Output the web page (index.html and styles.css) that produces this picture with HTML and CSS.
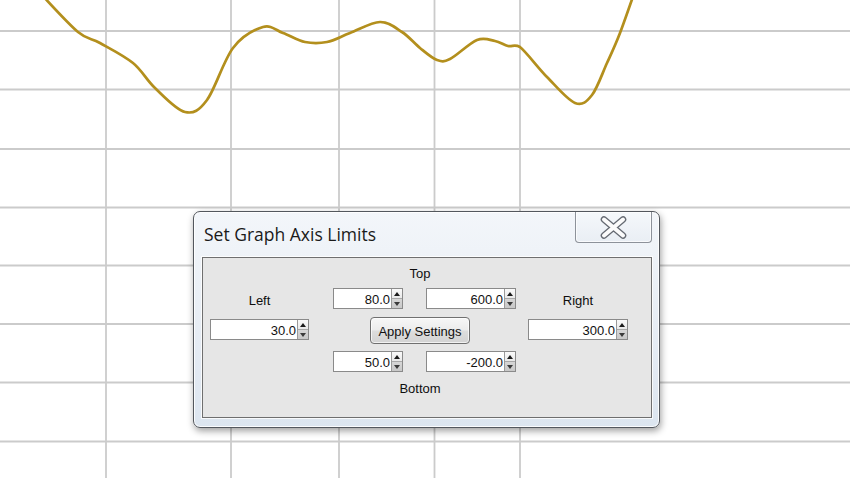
FILE: index.html
```html
<!DOCTYPE html>
<html lang="en">
<head>
<meta charset="utf-8">
<title>Set Graph Axis Limits</title>
<link rel="stylesheet" href="styles.css">
</head>
<body>
<div class="stage">
  <svg class="plot" width="850" height="478" viewBox="0 0 850 478" xmlns="http://www.w3.org/2000/svg">
    <g class="grid">
      <line x1="0" y1="31" x2="850" y2="31"/>
      <line x1="0" y1="89.5" x2="850" y2="89.5"/>
      <line x1="0" y1="149" x2="850" y2="149"/>
      <line x1="0" y1="207.5" x2="850" y2="207.5"/>
      <line x1="0" y1="265.5" x2="850" y2="265.5"/>
      <line x1="0" y1="324" x2="850" y2="324"/>
      <line x1="0" y1="382.5" x2="850" y2="382.5"/>
      <line x1="0" y1="441.5" x2="850" y2="441.5"/>
      <line x1="106" y1="0" x2="106" y2="478"/>
      <line x1="231" y1="0" x2="231" y2="478"/>
      <line x1="339" y1="0" x2="339" y2="478"/>
      <line x1="434.5" y1="0" x2="434.5" y2="478"/>
      <line x1="520" y1="0" x2="520" y2="478"/>
    </g>
    <path class="curve" d="M40,-7 C46.3,-0.5 68,23.7 78,32 C88,40.3 90.8,37.8 100,43 C109.2,48.2 123.8,55.5 133,63 C142.2,70.5 146.3,79.8 155,88 C163.7,96.2 176.3,110 185,112 C193.7,114 199,110.7 207,100 C215,89.3 223.7,60.2 233,48 C242.3,35.8 254.7,29.5 263,27 C271.3,24.5 276,30.5 283,33 C290,35.5 297.7,40.5 305,42 C312.3,43.5 319.5,43.5 327,42 C334.5,40.5 341.2,36.3 350,33 C358.8,29.7 371.3,22.2 380,22 C388.7,21.8 395.3,27.7 402,32 C408.7,36.3 414.2,43.3 420,48 C425.8,52.7 432,58.2 437,60 C442,61.8 443.3,62.3 450,59 C456.7,55.7 469.5,43 477,40 C484.5,37 489.8,40 495,41 C500.2,42 503.8,45 508,46 C512.2,47 514.5,44 520,47 C526.5,52.2 537.8,67.7 547,77 C556.2,86.3 567.5,100 575,103 C582.5,106 586.7,101.7 592,95 C597.3,88.3 602.3,73.3 607,63 C611.7,52.7 615.2,45.5 620,33 C624.8,20.5 633.3,-4.5 636,-12"/>
  </svg>

  <div class="dialog">
    <div class="titlebar">
      <span class="title">Set Graph Axis Limits</span>
      <div class="close">
        <svg width="27" height="23" viewBox="0 0 27 23" xmlns="http://www.w3.org/2000/svg">
          <path class="x-outline" d="M4,3.5 L23,19.5 M23,3.5 L4,19.5"/>
          <path class="x-fill" d="M4,3.5 L23,19.5 M23,3.5 L4,19.5"/>
        </svg>
      </div>
    </div>
    <div class="panel">
      <div class="label top-label">Top</div>

      <div class="label side-label left-label">Left</div>
      <div class="spinner w70 r2 c2"><div class="field">80.0</div><div class="spin"><span class="up"></span><span class="down"></span></div></div>
      <div class="spinner w90 r2 c3"><div class="field">600.0</div><div class="spin"><span class="up"></span><span class="down"></span></div></div>
      <div class="label side-label right-label">Right</div>

      <div class="spinner w99 r3 c1"><div class="field">30.0</div><div class="spin"><span class="up"></span><span class="down"></span></div></div>
      <button class="apply" type="button">Apply Settings</button>
      <div class="spinner w100 r3 c4"><div class="field">300.0</div><div class="spin"><span class="up"></span><span class="down"></span></div></div>

      <div class="spinner w70 r4 c2"><div class="field">50.0</div><div class="spin"><span class="up"></span><span class="down"></span></div></div>
      <div class="spinner w90 r4 c3"><div class="field">-200.0</div><div class="spin"><span class="up"></span><span class="down"></span></div></div>

      <div class="label bottom-label">Bottom</div>
    </div>
  </div>
</div>
</body>
</html>
```

FILE: styles.css
```css
* { box-sizing: border-box; }

html, body {
  margin: 0;
  padding: 0;
  background: #ffffff;
}

.stage {
  position: relative;
  width: 850px;
  height: 478px;
  overflow: hidden;
  background: #ffffff;
  font-family: "Liberation Sans", Arial, sans-serif;
}

.plot { display: block; }

.grid line {
  stroke: #cbcbcb;
  stroke-width: 1.8;
}

.curve {
  fill: none;
  stroke: #b38f1d;
  stroke-width: 2.7;
  stroke-linecap: round;
  stroke-linejoin: round;
}

/* dialog window */
.dialog {
  position: absolute;
  left: 193px;
  top: 211px;
  width: 467px;
  height: 217px;
  display: flex;
  flex-direction: column;
  padding: 0 7px 9px 8px;
  border: 1px solid #53575d;
  border-radius: 7px;
  background: linear-gradient(180deg, #f3f6fa 0%, #ebf0f6 35%, #e2e9f2 75%, #dce5ef 100%);
  box-shadow: inset 0 0 0 1px rgba(255, 255, 255, 0.85), 1px 3px 7px rgba(0, 0, 0, 0.38);
}

.titlebar {
  display: flex;
  align-items: flex-start;
  height: 45px;
  flex: none;
}

.title {
  margin-top: 12px;
  padding-left: 2px;
  font-family: "Open Sans", "Noto Sans", sans-serif;
  font-size: 17.5px;
  line-height: 20px;
  color: #1a1a1a;
}

.close {
  margin-left: auto;
  width: 77px;
  height: 31px;
  display: flex;
  align-items: center;
  justify-content: center;
  border: 1px solid #8d929a;
  border-top: none;
  border-radius: 0 0 4px 4px;
  background: linear-gradient(180deg, #f5f8fb 0%, #e9eef4 100%);
  box-shadow: inset 0 0 0 1px rgba(255, 255, 255, 0.7);
}

.x-outline {
  fill: none;
  stroke: #656a72;
  stroke-width: 6.6;
  stroke-linecap: round;
}

.x-fill {
  fill: none;
  stroke: #fbfbfb;
  stroke-width: 4;
  stroke-linecap: round;
}

/* content panel */
.panel {
  flex: 1;
  display: grid;
  grid-template-columns: 123px 93px 102px 100px;
  grid-template-rows: 30px 31px 32px 30px 20px;
  align-content: start;
  padding-left: 7px;
  border: 1px solid #6f6f6f;
  background: #e6e6e6;
  box-shadow: 0 0 0 1px rgba(255, 255, 255, 0.8);
}

.label {
  font-size: 13px;
  line-height: 15px;
  color: #0e0e0e;
  align-self: start;
}

.top-label {
  grid-row: 1;
  grid-column: 2 / 4;
  justify-self: center;
  margin-right: 21px;
  margin-top: 8px;
}

.side-label {
  grid-row: 2;
  margin-top: 5px;
  text-align: center;
}

.left-label { grid-column: 1; width: 99px; }
.right-label { grid-column: 4; width: 100px; }

.bottom-label {
  grid-row: 5;
  grid-column: 2 / 4;
  justify-self: center;
  margin-right: 21px;
}

/* spinners */
.spinner {
  display: flex;
  height: 21px;
  align-self: start;
  justify-self: start;
  border: 1px solid #8a8a8a;
  background: #ffffff;
}

.w70 { width: 70px; }
.w90 { width: 90px; }
.w99 { width: 99px; }
.w100 { width: 100px; }

.r2 { grid-row: 2; }
.r3 { grid-row: 3; }
.r4 { grid-row: 4; }
.c1 { grid-column: 1; }
.c2 { grid-column: 2; }
.c3 { grid-column: 3; }
.c4 { grid-column: 4; }

.field {
  flex: 1;
  padding: 2px 1px 0 0;
  text-align: right;
  font-size: 13px;
  line-height: 17px;
  color: #111111;
}

.spin {
  width: 11px;
  flex: none;
  display: flex;
  flex-direction: column;
  border-left: 1px solid #9a9a9a;
}

.spin span {
  flex: 1;
  display: flex;
  align-items: center;
  justify-content: center;
}

.spin .up {
  background: linear-gradient(180deg, #fafafa, #e9e9e9);
  border-bottom: 1px solid #a8a8a8;
}

.spin .down {
  background: linear-gradient(180deg, #d6d6d6, #c8c8c8);
}

.spin .up::before,
.spin .down::before {
  content: "";
  width: 0;
  height: 0;
  border-left: 3px solid transparent;
  border-right: 3px solid transparent;
}

.spin .up::before { border-bottom: 4px solid #1a1a1a; }
.spin .down::before { border-top: 4px solid #3a3a3a; }

/* button */
.apply {
  grid-row: 3;
  grid-column: 2 / 4;
  justify-self: center;
  align-self: start;
  margin: -2px 21px 0 0;
  width: 100px;
  height: 27px;
  padding: 1px 0 0;
  border: 1px solid #707070;
  border-radius: 4px;
  background: linear-gradient(180deg, #f7f7f7 0%, #ececec 48%, #dddddd 52%, #d3d3d3 100%);
  box-shadow: inset 0 0 0 1px rgba(255, 255, 255, 0.7);
  font-family: "Liberation Sans", Arial, sans-serif;
  font-size: 13px;
  line-height: 23px;
  color: #111111;
}
```
